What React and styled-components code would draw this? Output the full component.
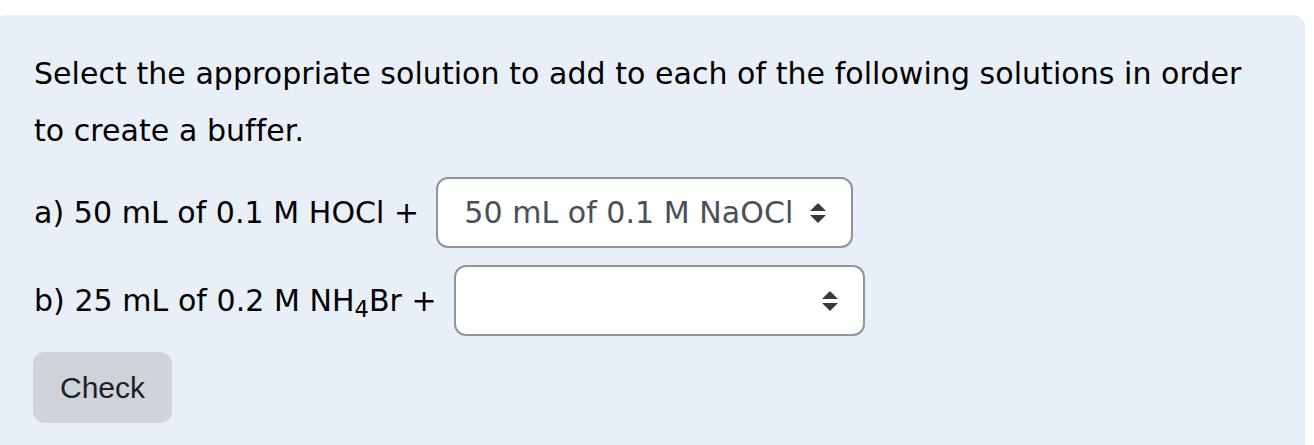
import React from 'react';
import styled, { createGlobalStyle } from 'styled-components';

const GlobalStyle = createGlobalStyle`
  html, body {
    margin: 0;
    padding: 0;
    background: #fff;
  }
  body {
    font-family: "DejaVu Sans", Verdana, sans-serif;
    color: #000;
  }
`;

const Formulation = styled.div`
  margin: 15px 9px 0 -6px;
  padding: 30px 40px 40px 40px;
  background: #e8eff7;
  border-radius: 12px;
  min-height: 420px;
  box-sizing: border-box;
`;

const QuestionText = styled.p`
  margin: 0 0 18px 0;
  font-size: 30px;
  letter-spacing: 0.05px;
  line-height: 57px;
`;

const Row = styled.div`
  display: flex;
  align-items: center;
  gap: 17px;
  margin-bottom: ${props => props.mb || 17}px;
  font-size: 30px;
  letter-spacing: 0.05px;
`;

const Sub = styled.sub`
  font-size: 0.75em;
  vertical-align: -0.25em;
  line-height: 0;
`;

const SelectBox = styled.div`
  display: flex;
  align-items: center;
  justify-content: space-between;
  box-sizing: border-box;
  width: ${props => props.width}px;
  height: 71px;
  padding: 0 25px 0 26px;
  background: #fff;
  border: 2px solid #8f959e;
  border-radius: 12px;
  color: #495057;
  font-size: 30px;
`;

const Arrows = () => (
  <svg width="16" height="20" viewBox="0 0 16 20">
    <path d="M8 0 L16 8 H0 Z M0 12 H16 L8 20 Z" fill="#343a40" />
  </svg>
);

const CheckButton = styled.button`
  box-sizing: border-box;
  width: 139px;
  height: 71px;
  border: none;
  border-radius: 12px;
  background: #ced4da;
  color: #1d2125;
  font-family: "Liberation Sans", Arial, sans-serif;
  font-size: 30px;
  margin-left: -1px;
`;

export default function App() {
  return (
    <>
      <GlobalStyle />
      <Formulation>
        <QuestionText>
          Select the appropriate solution to add to each of the following solutions in order to create a buffer.
        </QuestionText>
        <Row>
          <span>a) 50 mL of 0.1 M HOCl +</span>
          <SelectBox width={417}>
            <span>50 mL of 0.1 M NaOCl</span>
            <Arrows />
          </SelectBox>
        </Row>
        <Row mb={16}>
          <span>b) 25 mL of 0.2 M NH<Sub>4</Sub>Br +</span>
          <SelectBox width={411}>
            <span />
            <Arrows />
          </SelectBox>
        </Row>
        <CheckButton>Check</CheckButton>
      </Formulation>
    </>
  );
}
